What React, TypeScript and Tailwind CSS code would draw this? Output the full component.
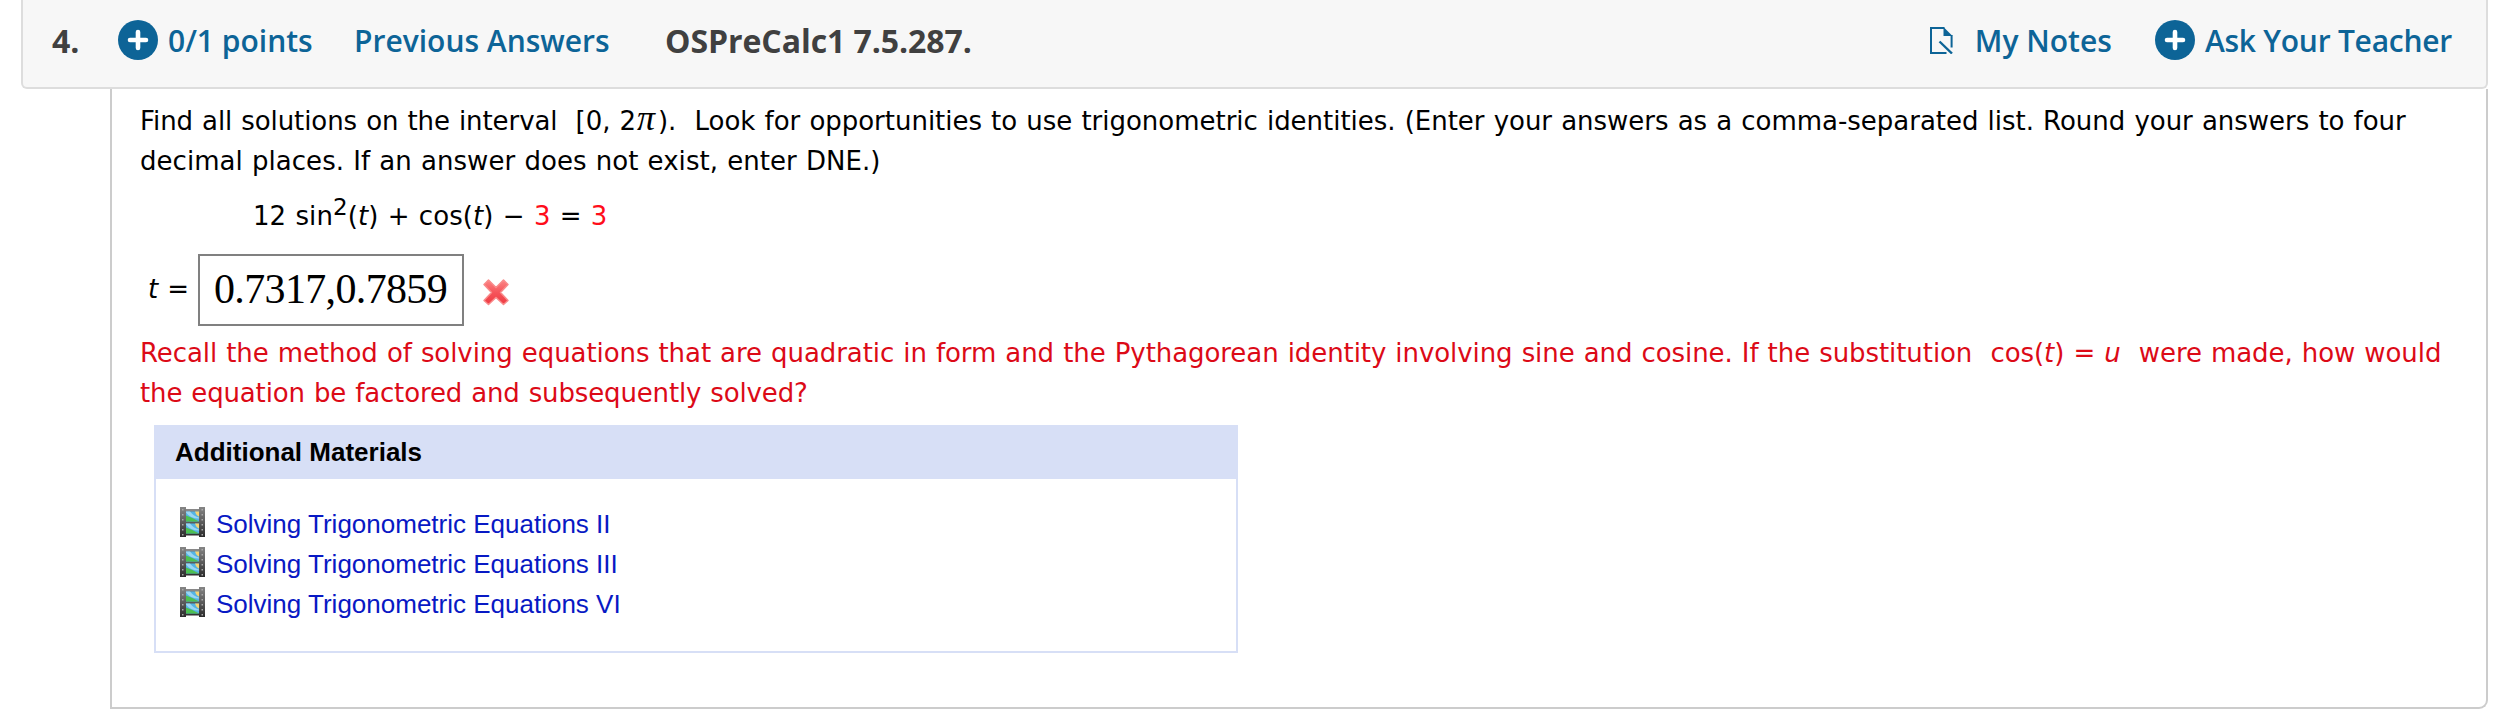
const materials = [
  'Solving Trigonometric Equations II',
  'Solving Trigonometric Equations III',
  'Solving Trigonometric Equations VI',
];

function PlusIcon() {
  return (
    <svg className="h-10 w-10 shrink-0" viewBox="0 0 40 40">
      <circle cx="20" cy="20" r="20" fill="#0d6497" />
      <path d="M20 12v16M12 20h16" stroke="#fff" strokeWidth="4.6" strokeLinecap="round" />
    </svg>
  );
}

function NotesIcon() {
  return (
    <svg className="mt-[27px] h-[27px] w-[23px] shrink-0" viewBox="0 0 23 27" fill="none" stroke="#0d6497" strokeWidth="2">
      <path d="M16.5 26H1V1h13.5" />
      <path d="M13.5 0l9 9h-9z" fill="#0d6497" stroke="none" />
      <path d="M21.6 8v12.5" />
      <path d="M9.5 14.5L22 26.5" strokeWidth="2.4" />
    </svg>
  );
}

function WrongIcon() {
  return (
    <svg className="mt-[3px] ml-[18px] h-7 w-7 shrink-0" viewBox="0 0 28 28">
      <defs>
        <linearGradient id="wrong" x1="0" y1="0" x2="0" y2="1">
          <stop offset="0" stopColor="#fb8585" />
          <stop offset="0.5" stopColor="#f6555b" />
          <stop offset="1" stopColor="#ee3a42" />
        </linearGradient>
      </defs>
      <path
        d="M6.5 2L14 9.5 21.5 2 26 6.5 18.5 14.5 26 22.5 21.5 26.5 14 19.5 6.5 26.5 2 22.5 9.5 14.5 2 6.5z"
        fill="url(#wrong)"
        stroke="#f98a8a"
        strokeWidth="1.5"
        strokeLinejoin="round"
      />
    </svg>
  );
}

function FilmIcon() {
  const holes = [2, 7, 12, 17, 22, 27];
  return (
    <svg className="mt-[3px] h-[30px] w-[25px] shrink-0" viewBox="0 0 25 30">
      <defs>
        <linearGradient id="film" x1="0" y1="0" x2="0" y2="1">
          <stop offset="0" stopColor="#858585" />
          <stop offset="0.5" stopColor="#5c5c5c" />
          <stop offset="1" stopColor="#2a2a2a" />
        </linearGradient>
      </defs>
      <rect width="25" height="30" fill="url(#film)" />
      <rect x="6" width="13" height="2" fill="#fff" />
      <rect x="6" y="28.5" width="13" height="1.5" fill="#fff" />
      <rect x="6" y="2" width="13" height="2" fill="#888" />
      {[4.5, 16.5].map((y) => (
        <g key={y}>
          <rect x="6" y={y} width="13" height="10" fill="#55b4e5" />
          <path d={`M6 ${y}h4q4 5 9 6v1q-9 0-13-6z`} fill="#9bd6f2" />
          <path d={`M15 ${y}h4v5q-3-1-4-5z`} fill="#f5d373" />
          <path d={`M6 ${y + 4}q6 2 13 6H6z`} fill="#4cc050" />
        </g>
      ))}
      {holes.map((y) => (
        <g key={y} fill="#aaa">
          <rect x="2" y={y} width="1.5" height="1.5" />
          <rect x="21.5" y={y} width="1.5" height="1.5" />
        </g>
      ))}
    </svg>
  );
}

function QuestionHeader() {
  return (
    <header className="ml-[21px] flex h-[89px] w-[2467px] rounded-b-[6px] border-2 border-t-0 border-[#ddd] bg-[#f7f7f7] font-['Open_Sans',sans-serif] text-[30px] leading-[82px] font-semibold whitespace-nowrap text-[#0d6497]">
      <span className="w-[95px] pl-[29px] text-[32px] font-bold text-[#404040]">4.</span>
      <div className="flex w-[236px]">
        <div className="pt-5">
          <PlusIcon />
        </div>
        <a className="ml-[10px]">0/1 points</a>
      </div>
      <a className="w-[311px]">Previous Answers</a>
      <span className="text-[32px] font-bold tracking-[-0.06px] text-[#404040]">OSPreCalc1 7.5.287.</span>
      <div className="ml-auto flex pr-[34px]">
        <NotesIcon />
        <a className="ml-[22px]">My Notes</a>
        <div className="ml-[43px] pt-5">
          <PlusIcon />
        </div>
        <a className="ml-[10px] tracking-[-0.25px]">Ask Your Teacher</a>
      </div>
    </header>
  );
}

function AnswerRow() {
  return (
    <div className="mt-[18px] flex h-[72px] items-center pl-2">
      <span className="w-[50px] pb-0.5">
        <i>t</i> =
      </span>
      <div className="h-[72px] w-[266px] border-2 border-[#808080] pl-[14px] font-['Liberation_Serif',serif] text-[42px] leading-[67px] tracking-[-0.65px] [word-spacing:0px] text-black">
        0.7317,0.7859
      </div>
      <WrongIcon />
    </div>
  );
}

function AdditionalMaterials() {
  return (
    <section className="mt-3 ml-[14px] h-[228px] w-[1084px] border-2 border-[#d7dff6] font-['Liberation_Sans',sans-serif] text-[26px] tracking-normal [word-spacing:0px]">
      <h2 className="h-[52px] bg-[#d7dff6] pl-[19px] leading-[50px] font-bold">Additional Materials</h2>
      <ul className="pt-[25px] pl-6">
        {materials.map((title) => (
          <li key={title} className="flex h-10 gap-[11px] text-[#0819c4]">
            <FilmIcon />
            <a>{title}</a>
          </li>
        ))}
      </ul>
    </section>
  );
}

export default function App() {
  return (
    <div className="h-[726px] w-[2504px] overflow-hidden bg-white">
      <QuestionHeader />
      <main className="ml-[110px] h-[620px] w-[2378px] rounded-br-[9px] border-2 border-t-0 border-[#ccc] pt-3 pl-[28px] font-['DejaVu_Sans',sans-serif] text-[26px] leading-10 [word-spacing:0.9px] whitespace-nowrap text-black">
        <p className="h-10">
          <span className="tracking-[-0.08px]">Find all solutions on the interval&nbsp; [0, 2</span>
          <i className="mr-[3px] ml-px font-['Liberation_Serif',serif] text-[36px] leading-[0]">π</i>
          <span className="tracking-[-0.02px]">
            ).&nbsp; Look for opportunities to use trigonometric identities. (Enter your answers as a comma-separated list. Round your answers to four
          </span>
        </p>
        <p className="h-10 tracking-[0.04px]">decimal places. If an answer does not exist, enter DNE.)</p>
        <p className="mt-[15px] h-10 pl-[113px] tracking-[0.08px]">
          12 sin<sup className="top-[-10px] text-[23px] leading-none">2</sup>(<i>t</i>) + cos(<i>t</i>) − <span className="text-[#ff0d1a]">3</span> = <span className="text-[#ff0d1a]">3</span>
        </p>
        <AnswerRow />
        <div className="mt-[7px] text-[#dc0a17]">
          <p className="h-10 tracking-[-0.07px]">
            Recall the method of solving equations that are quadratic in form and the Pythagorean identity involving sine and cosine. If the substitution&nbsp; cos(<i>t</i>) = <i>u</i>&nbsp; were made, how would
          </p>
          <p className="h-10 tracking-[-0.14px]">the equation be factored and subsequently solved?</p>
        </div>
        <AdditionalMaterials />
      </main>
    </div>
  );
}
